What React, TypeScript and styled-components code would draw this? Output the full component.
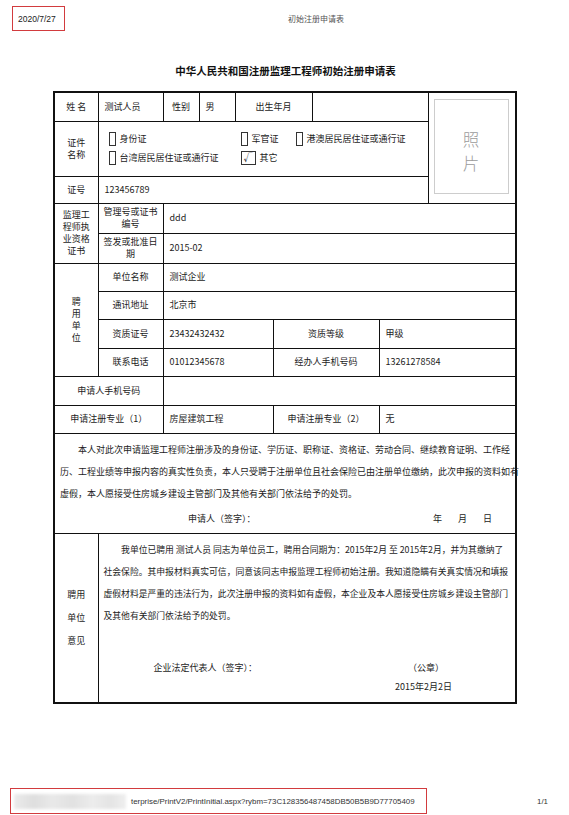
import React from "react";
import styled, { createGlobalStyle } from "styled-components";

const Global = createGlobalStyle`
  html, body { margin: 0; padding: 0; background: #fff; }
  body {
    font-family: "Noto Sans CJK SC", "Noto Sans", sans-serif;
    color: #1c1c1c;
  }
`;

const Page = styled.div`
  width: 569px;
  height: 815px;
  display: flex;
  flex-direction: column;
  overflow: hidden;
`;

const Header = styled.header`
  display: flex;
  align-items: center;
  margin-top: 6px;
  padding-left: 12px;
  height: 25px;
`;

const Annot = styled.div`
  box-sizing: border-box;
  border: 1.5px solid #d23b3e;
`;

const DateBox = styled(Annot)`
  width: 53px;
  height: 25px;
  display: flex;
  align-items: center;
  padding-left: 5px;
  font: 8.5px "Liberation Sans", Arial, sans-serif;
  color: #222;
`;

const HeadTitle = styled.div`
  margin-left: 223px;
  font-size: 8px;
  color: #555;
`;

const DocTitle = styled.h1`
  margin: 33px 0 0;
  text-align: center;
  font-size: 10.5px;
  line-height: 14px;
  font-weight: 700;
  color: #111;
  padding-left: 2px;
`;

const Table = styled.table`
  width: 462px;
  margin: 13px 0 0 53px;
  border-collapse: collapse;
  table-layout: fixed;
  border: 2px solid #111;
  font-size: 9px;
`;

const Row = styled.tr<{ $h: number }>`
  height: ${(p) => p.$h}px;
`;

const Label = styled.td<{ $lh?: number }>`
  border: 1px solid #111;
  padding: 0 4px;
  text-align: center;
  vertical-align: middle;
  line-height: ${(p) => p.$lh ?? 12}px;
`;

const Value = styled.td`
  border: 1px solid #111;
  padding: 0 6px;
  text-align: left;
  vertical-align: middle;
  line-height: 12px;
`;

const NarrowLabel = styled(Label)`
  padding: 0 5px;
`;

const PhotoCell = styled.td`
  border: 1px solid #111;
  padding: 0;
  vertical-align: middle;
`;

const PhotoBox = styled.div`
  box-sizing: border-box;
  width: 75px;
  height: 95px;
  margin: 0 auto 2px 5px;
  border: 1px solid #cdcdcd;
  display: flex;
  flex-direction: column;
  align-items: center;
  justify-content: center;
  padding-top: 8px;
  font-size: 16.5px;
  line-height: 24px;
  font-weight: 300;
  color: #9b9b9b;
`;

const PhotoChar = styled.span`
  display: block;
`;

const ChecksCell = styled.td`
  border: 1px solid #111;
  padding: 0 10px;
  vertical-align: middle;
`;

const Checks = styled.div`
  display: grid;
  grid-template-columns: 132px 55px auto;
  row-gap: 5px;
  align-items: center;
`;

const CheckItem = styled.span`
  display: inline-flex;
  align-items: center;
  gap: 4px;
  white-space: nowrap;
  line-height: 14px;
`;

const Box = styled.span<{ $checked?: boolean }>`
  box-sizing: border-box;
  display: inline-flex;
  align-items: center;
  justify-content: center;
  height: 14px;
  min-width: 7px;
  padding: 0 ${(p) => (p.$checked ? "2px" : "0")};
  border: 1px solid #333;
  font-size: 9px;
`;

const BlockCell = styled.td`
  border: 1px solid #111;
  padding: 5px 5px 0;
  vertical-align: top;
`;

const Para = styled.p<{ $fs?: number }>`
  margin: 0;
  text-indent: 2em;
  line-height: 22px;
  white-space: nowrap;
  font-size: ${(p) => p.$fs ?? 9}px;
`;

const SignLine = styled.div<{ $pl: number; $pr: number; $mt: number }>`
  display: flex;
  align-items: center;
  white-space: nowrap;
  line-height: 22px;
  padding-left: ${(p) => p.$pl}px;
  padding-right: ${(p) => p.$pr}px;
  margin-top: ${(p) => p.$mt}px;
`;

const Push = styled.span`
  margin-left: auto;
`;

const DateSlots = styled.span`
  margin-left: auto;
  display: flex;
  gap: 16px;
`;

const DateLine = styled.div`
  text-align: right;
  padding-right: 58px;
  line-height: 16px;
`;

const Footer = styled.footer`
  margin-top: auto;
  margin-bottom: 1px;
  display: flex;
  align-items: center;
  padding-left: 10px;
  padding-right: 21px;
`;

const UrlBox = styled(Annot)`
  width: 417px;
  height: 26px;
  display: flex;
  align-items: center;
  padding-left: 3px;
  font: 7.9px "Liberation Sans", Arial, sans-serif;
  color: #333;
`;

const Redacted = styled.span`
  width: 112px;
  height: 15px;
  background: linear-gradient(
    90deg,
    #ebebeb 0%,
    #dedede 18%,
    #e9e9e9 34%,
    #e1e1e1 52%,
    #ececec 70%,
    #e4e4e4 86%,
    #efefef 100%
  );
  filter: blur(1.5px);
`;

const UrlText = styled.span`
  margin-left: 5px;
`;

const PageNum = styled.span`
  margin-left: auto;
  font: 7.9px "Liberation Sans", Arial, sans-serif;
  color: #333;
`;

export default function App() {
  return (
    <>
      <Global />
      <Page>
        <Header>
          <DateBox>2020/7/27</DateBox>
          <HeadTitle>初始注册申请表</HeadTitle>
        </Header>

        <DocTitle>中华人民共和国注册监理工程师初始注册申请表</DocTitle>

        <Table>
          <colgroup>
            <col style={{ width: 44 }} />
            <col style={{ width: 65 }} />
            <col style={{ width: 36 }} />
            <col style={{ width: 36 }} />
            <col style={{ width: 38 }} />
            <col style={{ width: 39 }} />
            <col style={{ width: 67 }} />
            <col style={{ width: 49 }} />
            <col style={{ width: 88 }} />
          </colgroup>
          <tbody>
            <Row $h={29}>
              <Label>姓 名</Label>
              <Value>测试人员</Value>
              <Label>性别</Label>
              <Value>男</Value>
              <Label colSpan={2}>出生年月</Label>
              <Value colSpan={2}></Value>
              <PhotoCell rowSpan={3}>
                <PhotoBox>
                  <PhotoChar>照</PhotoChar>
                  <PhotoChar>片</PhotoChar>
                </PhotoBox>
              </PhotoCell>
            </Row>
            <Row $h={55}>
              <Label $lh={12}>
                证件
                <br />
                名称
              </Label>
              <ChecksCell colSpan={7}>
                <Checks>
                  <CheckItem>
                    <Box />
                    身份证
                  </CheckItem>
                  <CheckItem>
                    <Box />
                    军官证
                  </CheckItem>
                  <CheckItem>
                    <Box />
                    港澳居民居住证或通行证
                  </CheckItem>
                  <CheckItem>
                    <Box />
                    台湾居民居住证或通行证
                  </CheckItem>
                  <CheckItem>
                    <Box $checked>√</Box>
                    其它
                  </CheckItem>
                </Checks>
              </ChecksCell>
            </Row>
            <Row $h={27}>
              <Label>证号</Label>
              <Value colSpan={7}>123456789</Value>
            </Row>
            <Row $h={30}>
              <NarrowLabel rowSpan={2}>监理工程师执业资格证书</NarrowLabel>
              <Label>管理号或证书编号</Label>
              <Value colSpan={7}>ddd</Value>
            </Row>
            <Row $h={30}>
              <Label>签发或批准日期</Label>
              <Value colSpan={7}>2015-02</Value>
            </Row>
            <Row $h={28}>
              <Label rowSpan={4}>
                聘
                <br />
                用
                <br />
                单
                <br />
                位
              </Label>
              <Label>单位名称</Label>
              <Value colSpan={7}>测试企业</Value>
            </Row>
            <Row $h={28}>
              <Label>通讯地址</Label>
              <Value colSpan={7}>北京市</Value>
            </Row>
            <Row $h={29}>
              <Label>资质证号</Label>
              <Value colSpan={3}>23432432432</Value>
              <Label colSpan={2}>资质等级</Label>
              <Value colSpan={2}>甲级</Value>
            </Row>
            <Row $h={28}>
              <Label>联系电话</Label>
              <Value colSpan={3}>01012345678</Value>
              <Label colSpan={2}>经办人手机号码</Label>
              <Value colSpan={2}>13261278584</Value>
            </Row>
            <Row $h={29}>
              <Label colSpan={2}>申请人手机号码</Label>
              <Value colSpan={7}></Value>
            </Row>
            <Row $h={28}>
              <Label colSpan={2}>申请注册专业（1）</Label>
              <Value colSpan={3}>房屋建筑工程</Value>
              <Label colSpan={2}>申请注册专业（2）</Label>
              <Value colSpan={2}>无</Value>
            </Row>
            <Row $h={100}>
              <BlockCell colSpan={9}>
                <Para>
                  本人对此次申请监理工程师注册涉及的身份证、学历证、职称证、资格证、劳动合同、继续教育证明、工作经
                  <br />
                  历、工程业绩等申报内容的真实性负责，本人只受聘于注册单位且社会保险已由注册单位缴纳，此次申报的资料如有
                  <br />
                  虚假，本人愿接受住房城乡建设主管部门及其他有关部门依法给予的处罚。
                </Para>
                <SignLine $pl={128} $pr={18} $mt={3}>
                  <span>申请人（签字）：</span>
                  <DateSlots>
                    <span>年</span>
                    <span>月</span>
                    <span>日</span>
                  </DateSlots>
                </SignLine>
              </BlockCell>
            </Row>
            <Row $h={170}>
              <Label $lh={23}>
                聘用
                <br />
                单位
                <br />
                意见
              </Label>
              <BlockCell colSpan={8}>
                <Para $fs={8.8}>
                  我单位已聘用 测试人员 同志为单位员工，聘用合同期为：2015年2月 至 2015年2月，并为其缴纳了
                  <br />
                  社会保险。其申报材料真实可信，同意该同志申报监理工程师初始注册。我知道隐瞒有关真实情况和填报
                  <br />
                  虚假材料是严重的违法行为，此次注册申报的资料如有虚假，本企业及本人愿接受住房城乡建设主管部门
                  <br />
                  及其他有关部门依法给予的处罚。
                </Para>
                <SignLine $pl={50} $pr={66} $mt={30}>
                  <span>企业法定代表人（签字）：</span>
                  <Push>（公章）</Push>
                </SignLine>
                <DateLine>2015年2月2日</DateLine>
              </BlockCell>
            </Row>
          </tbody>
        </Table>

        <Footer>
          <UrlBox>
            <Redacted />
            <UrlText>
              terprise/PrintV2/PrintInitial.aspx?rybm=73C128356487458DB50B5B9D77705409
            </UrlText>
          </UrlBox>
          <PageNum>1/1</PageNum>
        </Footer>
      </Page>
    </>
  );
}
